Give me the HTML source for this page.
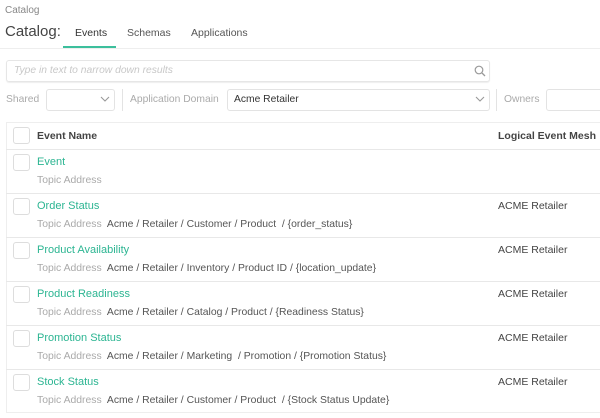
<!DOCTYPE html><html><head><style>
*{box-sizing:border-box;margin:0;padding:0}
body{width:600px;height:418px;background:#fff;font-family:"Liberation Sans",sans-serif;position:relative;overflow:hidden;color:#333}
.a{position:absolute;white-space:nowrap}
.cb{position:absolute;width:17px;height:17px;border:1px solid #ddd;border-radius:3px;background:#fff}
.g{color:#2cb592;font-size:11px}
.t{font-size:10.4px;color:#aaa}
.t span{color:#555}
.m{font-size:10.5px;color:#444}
.row{position:absolute;left:6px;right:0;border-top:1px solid #e8e8e8}
</style></head><body>
<div class="a" style="left:5px;top:5px;font-size:10px;color:#888">Catalog</div>
<div class="a" style="left:5px;top:23px;font-size:15px;color:#444">Catalog:</div>
<div class="a" style="left:75px;top:27px;font-size:10.5px;color:#333">Events</div>
<div class="a" style="left:127px;top:27px;font-size:10.5px;color:#555">Schemas</div>
<div class="a" style="left:191px;top:27px;font-size:10.5px;color:#555">Applications</div>
<div class="a" style="left:63px;top:46px;width:53px;height:2px;background:#3cbf9c"></div>
<div class="a" style="left:0;top:48px;width:600px;height:1px;background:#eee"></div>
<div class="a" style="left:6px;top:60px;width:484px;height:22px;border:1px solid #e6e6e6;border-radius:3px;box-shadow:0 1px 1px #eee"></div>
<div class="a" style="left:14px;top:65px;font-size:10.3px;color:#c8c8c8;font-style:italic">Type in text to narrow down results</div>
<svg class="a" style="left:474px;top:65px" width="12" height="12"><circle cx="5" cy="5" r="3.8" fill="none" stroke="#999" stroke-width="1.2"/><path d="M8 8L11 11" stroke="#999" stroke-width="1.3"/></svg>
<div class="a" style="left:6px;top:94px;font-size:10.3px;color:#aaa">Shared</div>
<div class="a" style="left:46px;top:89px;width:69px;height:22px;border:1px solid #e3e3e3;border-radius:3px"></div>
<svg class="a" style="left:100px;top:96px" width="10" height="7"><path d="M1 1L5 5L9 1" fill="none" stroke="#999" stroke-width="1.1"/></svg>
<div class="a" style="left:122px;top:89px;width:1px;height:22px;background:#e3e3e3"></div>
<div class="a" style="left:130px;top:94px;font-size:10.3px;color:#aaa">Application Domain</div>
<div class="a" style="left:227px;top:89px;width:263px;height:22px;border:1px solid #e3e3e3;border-radius:3px"></div>
<div class="a" style="left:234px;top:94px;font-size:10.3px;color:#333">Acme Retailer</div>
<svg class="a" style="left:475px;top:96px" width="10" height="7"><path d="M1 1L5 5L9 1" fill="none" stroke="#999" stroke-width="1.1"/></svg>
<div class="a" style="left:496px;top:89px;width:1px;height:22px;background:#e3e3e3"></div>
<div class="a" style="left:504px;top:94px;font-size:10.3px;color:#aaa">Owners</div>
<div class="a" style="left:546px;top:89px;width:60px;height:22px;border:1px solid #e3e3e3;border-radius:3px"></div>
<div class="a" style="left:6px;top:122px;width:600px;height:291px;border:1px solid #eee"></div>
<div class="cb" style="left:13px;top:127px"></div>
<div class="a" style="left:37px;top:130px;font-size:10.5px;color:#444;font-weight:bold">Event Name</div>
<div class="a" style="left:498px;top:130px;font-size:10.5px;color:#444;font-weight:bold">Logical Event Mesh</div>

<div class="row" style="top:149px;height:44px"><div class="cb" style="left:7px;top:4px"></div><div class="a g" style="left:31px;top:6px">Event</div><div class="a t" style="left:31px;top:25px">Topic Address</div></div>
<div class="row" style="top:193px;height:44px"><div class="cb" style="left:7px;top:4px"></div><div class="a g" style="left:31px;top:6px">Order Status</div><div class="a t" style="left:31px;top:25px">Topic Address&nbsp; <span>Acme / Retailer / Customer / Product &nbsp;/ {order_status}</span></div><div class="a m" style="left:492px;top:6px">ACME Retailer</div></div>
<div class="row" style="top:237px;height:44px"><div class="cb" style="left:7px;top:4px"></div><div class="a g" style="left:31px;top:6px">Product Availability</div><div class="a t" style="left:31px;top:25px">Topic Address&nbsp; <span>Acme / Retailer / Inventory / Product ID / {location_update}</span></div><div class="a m" style="left:492px;top:6px">ACME Retailer</div></div>
<div class="row" style="top:281px;height:44px"><div class="cb" style="left:7px;top:4px"></div><div class="a g" style="left:31px;top:6px">Product Readiness</div><div class="a t" style="left:31px;top:25px">Topic Address&nbsp; <span>Acme / Retailer / Catalog / Product / {Readiness Status}</span></div><div class="a m" style="left:492px;top:6px">ACME Retailer</div></div>
<div class="row" style="top:325px;height:44px"><div class="cb" style="left:7px;top:4px"></div><div class="a g" style="left:31px;top:6px">Promotion Status</div><div class="a t" style="left:31px;top:25px">Topic Address&nbsp; <span>Acme / Retailer / Marketing &nbsp;/ Promotion / {Promotion Status}</span></div><div class="a m" style="left:492px;top:6px">ACME Retailer</div></div>
<div class="row" style="top:369px;height:44px"><div class="cb" style="left:7px;top:4px"></div><div class="a g" style="left:31px;top:6px">Stock Status</div><div class="a t" style="left:31px;top:25px">Topic Address&nbsp; <span>Acme / Retailer / Customer / Product &nbsp;/ {Stock Status Update}</span></div><div class="a m" style="left:492px;top:6px">ACME Retailer</div></div>
</body></html>
